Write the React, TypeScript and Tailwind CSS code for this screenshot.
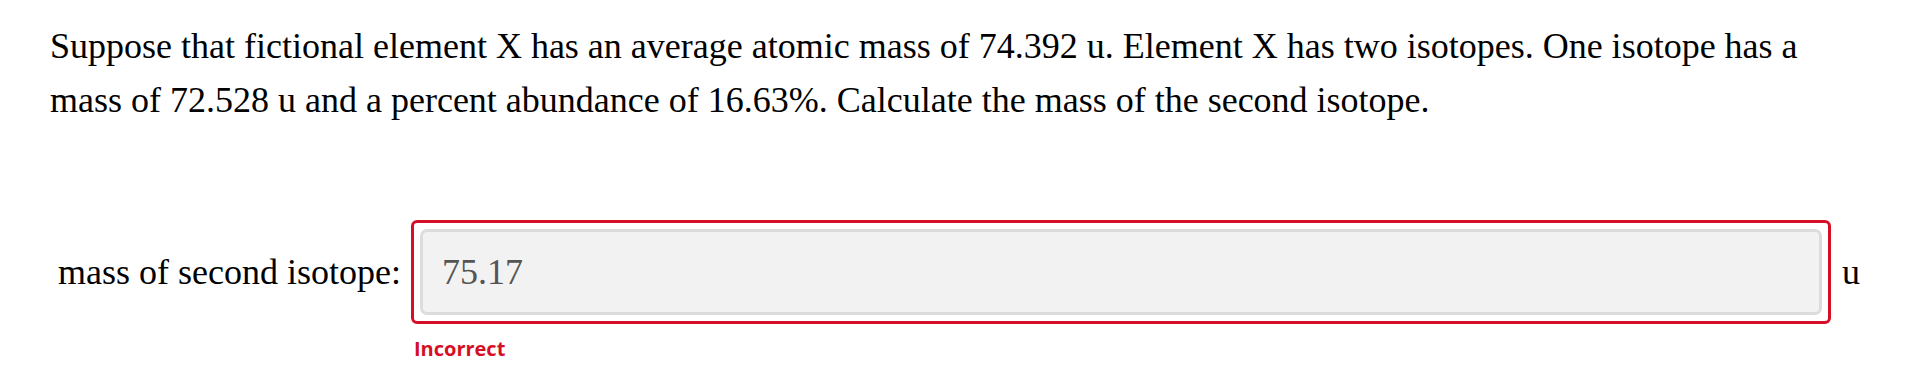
export default function App() {
  return (
    <div className="w-[1916px] h-[374px] bg-white font-['Liberation_Serif','Times_New_Roman',serif] text-black">
      {/* Question */}
      <p className="pl-[50px] pr-[80px] pt-[19px] text-[36px] leading-[54px]">
        Suppose that fictional element X has an average atomic mass of 74.392 u. Element X has two isotopes. One isotope has a mass of 72.528 u and a percent abundance of 16.63%. Calculate the mass of the second isotope.
      </p>

      {/* Answer row */}
      <div className="mt-[93px] flex items-start pl-[58px] pr-[56px]">
        <div className="h-[104px] flex items-center text-[36px] whitespace-nowrap">mass of second isotope:</div>
        <div className="ml-[10px] flex-1 flex flex-col">
          <div className="h-[104px] border-[3px] border-[#d50f25] rounded-[6px] p-[6px]">
            <div className="h-full border-[3px] border-[#dcdcdc] bg-[#f2f2f2] rounded-[7px] flex items-center pl-[19px] text-[36px] text-[#555]">
              75.17
            </div>
          </div>
          <div className="mt-[11px] pl-[3px] font-['Open_Sans',sans-serif] font-bold text-[20px] leading-[28px] text-[#d50f25]">
            Incorrect
          </div>
        </div>
        <div className="h-[104px] ml-[11px] flex items-center text-[36px]">u</div>
      </div>
    </div>
  );
}
